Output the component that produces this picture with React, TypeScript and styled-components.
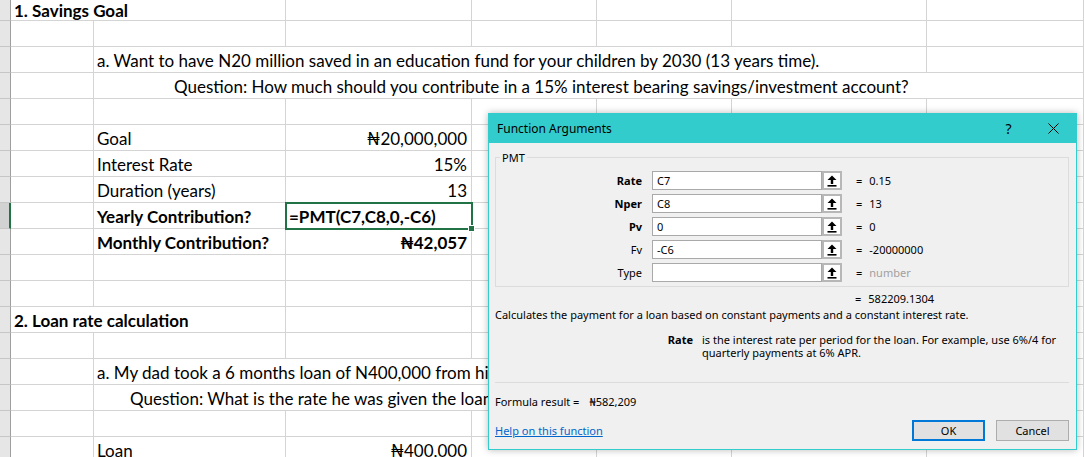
import React from 'react';
import styled, { createGlobalStyle } from 'styled-components';

const GlobalStyle = createGlobalStyle`
  html, body {
    margin: 0;
    padding: 0;
    background: #ffffff;
  }
  body {
    width: 1084px;
    height: 457px;
    overflow: hidden;
  }
`

const Page = styled.div`
  position: relative;
  width: 1084px;
  height: 457px;
  overflow: hidden;
  font-family: Lato, "Noto Sans", "DejaVu Sans", sans-serif;
  color: #000;
`

const Sheet = styled.div`
  display: grid;
  grid-template-columns: 11px 83px 192px 186px 125px 135px 195px 1fr;
  grid-template-rows: 21px;
  grid-auto-rows: 26px;
`

const RowHead = styled.div<{ $active?: boolean }>`
  background: ${p => p.$active ? '#d2d2d2' : '#e6e6e6'};
  border-bottom: 1px solid #c6c6c6;
  border-right: ${p => p.$active ? '2px solid #217346' : '1px solid #9e9e9e'};
`

const Cell = styled.div<{ $span?: number; $right?: boolean; $bold?: boolean; $indent?: number; $selected?: boolean }>`
  grid-column: span ${p => p.$span ?? 1};
  position: relative;
  display: flex;
  align-items: center;
  justify-content: ${p => p.$right ? 'flex-end' : 'flex-start'};
  min-width: 0;
  padding: 1px 4px 0 ${p => p.$indent ?? 3}px;
  border-right: 1px solid #d4d4d4;
  border-bottom: 1px solid #d4d4d4;
  font-size: 17px;
  font-weight: ${p => p.$bold ? 700 : 400};
  white-space: nowrap;
  overflow: ${p => p.$selected ? 'visible' : 'hidden'};
  outline: ${p => p.$selected ? '2px solid #217346' : 'none'};
  outline-offset: -1px;
  z-index: ${p => p.$selected ? 1 : 0};

  ${p => p.$selected && `
    &::after {
      content: '';
      position: absolute;
      right: -4px;
      bottom: -4px;
      width: 5px;
      height: 5px;
      background: #217346;
      border: 1px solid #fff;
    }
  `}
`

interface CellSpec {
  text?: string
  span?: number
  right?: boolean
  bold?: boolean
  indent?: number
  selected?: boolean
}

const empty = (n: number): CellSpec[] => Array.from({ length: n }, () => ({}))

const rows: CellSpec[][] = [
  [{ text: '1. Savings Goal', span: 2, bold: true }, ...empty(5)],
  empty(7),
  [{}, { text: 'a. Want to have N20 million saved in an education fund for your children by 2030 (13 years time).', span: 5 }, {}],
  [{}, { text: 'Question: How much should you contribute in a 15% interest bearing savings/investment account?', span: 6, indent: 80 }],
  empty(7),
  [{}, { text: 'Goal' }, { text: '₦20,000,000', right: true }, ...empty(4)],
  [{}, { text: 'Interest Rate' }, { text: '15%', right: true }, ...empty(4)],
  [{}, { text: 'Duration (years)' }, { text: '13', right: true }, ...empty(4)],
  [{}, { text: 'Yearly Contribution?', bold: true }, { text: '=PMT(C7,C8,0,-C6)', bold: true, selected: true }, ...empty(4)],
  [{}, { text: 'Monthly Contribution?', bold: true }, { text: '₦42,057', right: true, bold: true }, ...empty(4)],
  empty(7),
  empty(7),
  [{ text: '2. Loan rate calculation', span: 2, bold: true }, ...empty(5)],
  empty(7),
  [{}, { text: 'a. My dad took a 6 months loan of N400,000 from his bank and had to pay back N450,000 at the end of the loan period.', span: 6 }],
  [{}, { text: 'Question: What is the rate he was given the loan at?', span: 6, indent: 36 }],
  empty(7),
  [{}, { text: 'Loan' }, { text: '₦400,000', right: true }, ...empty(4)],
]

/* ---------- dialog ---------- */

const Dialog = styled.div`
  position: absolute;
  left: 488px;
  top: 113px;
  width: 589px;
  height: 337px;
  box-sizing: border-box;
  border: 1px solid #33cccc;
  background: #f0f0f0;
  box-shadow: 0 0 7px rgba(0, 0, 0, 0.28);
  display: flex;
  flex-direction: column;
  font-family: "Noto Sans", "Open Sans", "DejaVu Sans", sans-serif;
  font-size: 11px;
  color: #000;
`

const TitleBar = styled.div`
  height: 29px;
  background: #33cccc;
  display: flex;
  align-items: center;
  padding-left: 8px;
  font-size: 12px;
`

const Title = styled.div`
  flex: 1;
`

const TitleButton = styled.div`
  width: 45px;
  height: 29px;
  display: flex;
  align-items: center;
  justify-content: center;
  font-size: 14px;
`

const Body = styled.div`
  flex: 1;
  display: flex;
  flex-direction: column;
  padding: 8px 7px 0 6px;
`

const Group = styled.fieldset`
  margin: 0;
  padding: 7px 0 4px 0;
  border: 1px solid #dcdcdc;
  min-width: 0;
`

const GroupLegend = styled.legend`
  margin-left: 4px;
  padding: 0 2px;
  font-size: 11px;
  line-height: 13px;
`

const ArgGrid = styled.div`
  display: grid;
  grid-template-columns: 156px 170px 20px auto 1fr;
  grid-auto-rows: 19px;
  row-gap: 4px;
  align-items: center;
`

const ArgLabel = styled.div<{ $required?: boolean }>`
  text-align: right;
  padding-right: 10px;
  font-weight: ${p => p.$required ? 700 : 400};
`

const ArgInput = styled.div`
  height: 19px;
  box-sizing: border-box;
  border: 1px solid #a9a9a9;
  background: #fff;
  padding-left: 4px;
  display: flex;
  align-items: center;
`

const RefButton = styled.div`
  height: 19px;
  box-sizing: border-box;
  border: 2px solid #b7b7b7;
  background: #fff;
  display: flex;
  align-items: center;
  justify-content: center;
`

const EqSign = styled.span<{ $lead?: number }>`
  padding: 0 7px 0 ${p => p.$lead ?? 14}px;
`

const ArgValue = styled.div<{ $hint?: boolean }>`
  color: ${p => p.$hint ? '#a0a0a0' : '#000'};
`

const ResultLine = styled.div`
  margin-top: 5px;
  line-height: 14px;
  padding-left: 360px;
  display: flex;
`

const Summary = styled.div`
  margin-top: 2px;
  line-height: 14px;
`

const ArgHelp = styled.div`
  margin-top: 11px;
  display: grid;
  grid-template-columns: 198px 1fr;
  column-gap: 9px;
  line-height: 13px;
`

const HelpName = styled.div`
  text-align: right;
  font-weight: 700;
`

const HelpText = styled.div`
  white-space: nowrap;
`

const Separator = styled.div`
  margin-top: 23px;
  height: 1px;
  background: #dcdcdc;
`

const FormulaResult = styled.div`
  margin-top: 12px;
  line-height: 14px;
`

const ResultAmount = styled.span`
  margin-left: 10px;
`

const Footer = styled.div`
  margin-top: 11px;
  display: flex;
  align-items: center;
  gap: 11px;
`

const HelpLink = styled.a`
  flex: 1;
  color: #0066cc;
  text-decoration: underline;
`

const DialogButton = styled.div<{ $primary?: boolean }>`
  width: 73px;
  height: 21px;
  box-sizing: border-box;
  border: ${p => p.$primary ? '2px solid #0078d7' : '1px solid #adadad'};
  background: #e1e1e1;
  display: flex;
  align-items: center;
  justify-content: center;
`

const RefIcon = () => (
  <svg width="10" height="12" viewBox="0 0 10 12">
    <path d="M5 0.5 L9.5 5 H6.2 V9 H3.8 V5 H0.5 Z" fill="#000" />
    <rect x="0.5" y="10" width="9" height="1.6" fill="#000" />
  </svg>
)

const CloseIcon = () => (
  <svg width="11" height="11" viewBox="0 0 11 11">
    <path d="M0.5 0.5 L10.5 10.5 M10.5 0.5 L0.5 10.5" stroke="#000" strokeWidth="1" />
  </svg>
)

interface ArgSpec {
  name: string
  required?: boolean
  input: string
  value: string
  hint?: boolean
}

const args: ArgSpec[] = [
  { name: 'Rate', required: true, input: 'C7', value: '0.15' },
  { name: 'Nper', required: true, input: 'C8', value: '13' },
  { name: 'Pv', required: true, input: '0', value: '0' },
  { name: 'Fv', input: '-C6', value: '-20000000' },
  { name: 'Type', input: '', value: 'number', hint: true },
]

const App = () => {
  return (
    <>
      <GlobalStyle />
      <Page>
        <Sheet>
          {rows.map((row, r) => (
            <React.Fragment key={r}>
              <RowHead $active={r === 8} />
              {row.map((c, i) => (
                <Cell key={i} $span={c.span} $right={c.right} $bold={c.bold}
                  $indent={c.indent} $selected={c.selected}>
                  {c.text}
                </Cell>
              ))}
            </React.Fragment>
          ))}
        </Sheet>

        <Dialog>
          <TitleBar>
            <Title>Function Arguments</Title>
            <TitleButton>?</TitleButton>
            <TitleButton><CloseIcon /></TitleButton>
          </TitleBar>
          <Body>
            <Group>
              <GroupLegend>PMT</GroupLegend>
              <ArgGrid>
                {args.map(a => (
                  <React.Fragment key={a.name}>
                    <ArgLabel $required={a.required}>{a.name}</ArgLabel>
                    <ArgInput>{a.input}</ArgInput>
                    <RefButton><RefIcon /></RefButton>
                    <EqSign>=</EqSign>
                    <ArgValue $hint={a.hint}>{a.value}</ArgValue>
                  </React.Fragment>
                ))}
              </ArgGrid>
            </Group>

            <ResultLine>
              <EqSign $lead={0}>=</EqSign>
              <span>582209.1304</span>
            </ResultLine>
            <Summary>Calculates the payment for a loan based on constant payments and a constant interest rate.</Summary>
            <ArgHelp>
              <HelpName>Rate</HelpName>
              <HelpText>
                is the interest rate per period for the loan. For example, use 6%/4 for<br />
                quarterly payments at 6% APR.
              </HelpText>
            </ArgHelp>
            <Separator />
            <FormulaResult>
              Formula result =<ResultAmount>₦582,209</ResultAmount>
            </FormulaResult>
            <Footer>
              <HelpLink>Help on this function</HelpLink>
              <DialogButton $primary>OK</DialogButton>
              <DialogButton>Cancel</DialogButton>
            </Footer>
          </Body>
        </Dialog>
      </Page>
    </>
  );
};

export default App;
